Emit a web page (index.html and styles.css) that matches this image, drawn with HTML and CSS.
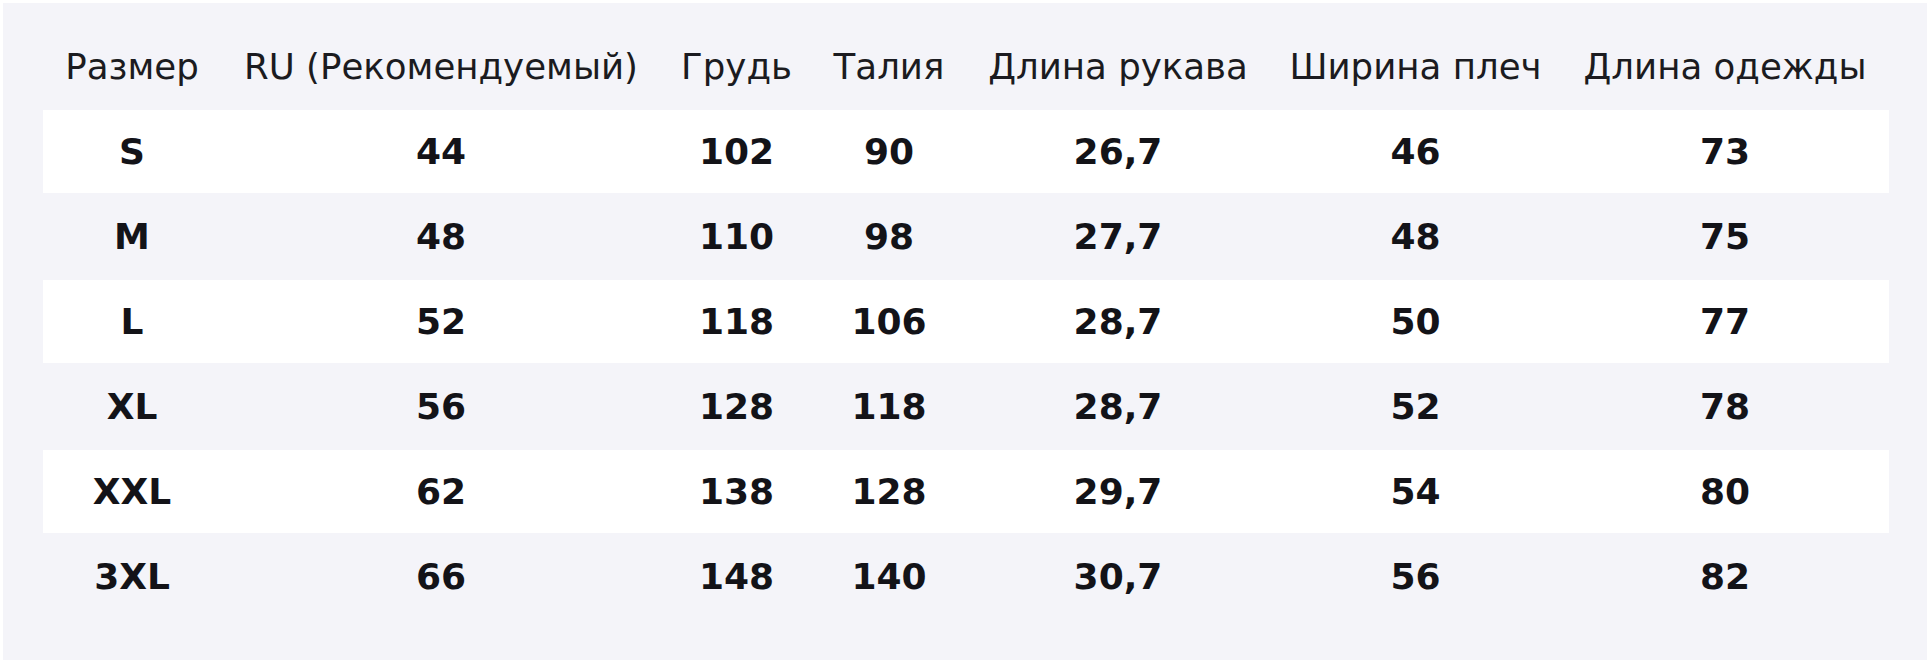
FILE: index.html
```html
<!DOCTYPE html>
<html lang="ru">
<head>
<meta charset="utf-8">
<title>Таблица размеров</title>
<link rel="stylesheet" href="styles.css">
</head>
<body>
<div class="sheet">
  <div class="table">
    <div class="row head">
      <div>Размер</div><div>RU (Рекомендуемый)</div><div>Грудь</div><div>Талия</div><div>Длина рукава</div><div>Ширина плеч</div><div>Длина одежды</div>
    </div>
    <div class="row light">
      <div>S</div><div>44</div><div>102</div><div>90</div><div>26,7</div><div>46</div><div>73</div>
    </div>
    <div class="row">
      <div>M</div><div>48</div><div>110</div><div>98</div><div>27,7</div><div>48</div><div>75</div>
    </div>
    <div class="row light">
      <div>L</div><div>52</div><div>118</div><div>106</div><div>28,7</div><div>50</div><div>77</div>
    </div>
    <div class="row">
      <div>XL</div><div>56</div><div>128</div><div>118</div><div>28,7</div><div>52</div><div>78</div>
    </div>
    <div class="row light">
      <div>XXL</div><div>62</div><div>138</div><div>128</div><div>29,7</div><div>54</div><div>80</div>
    </div>
    <div class="row">
      <div>3XL</div><div>66</div><div>148</div><div>140</div><div>30,7</div><div>56</div><div>82</div>
    </div>
  </div>
</div>
</body>
</html>
```
FILE: styles.css
```css
html, body {
  margin: 0;
  padding: 0;
  background: #ffffff;
}
body {
  padding: 3px;
  font-family: "DejaVu Sans", "Liberation Sans", sans-serif;
  color: #131318;
}
.sheet {
  background: #f4f4f9;
  padding: 22px 38px 40px 40px;
}
.table {
  display: flex;
  flex-direction: column;
}
.row {
  display: grid;
  grid-template-columns: 178px 440px 151px 154px 304px 291px 328px;
  height: 83px;
  border-bottom: 2px solid transparent;
  background-clip: padding-box;
  align-items: center;
  text-align: center;
  font-size: 36px;
  font-weight: bold;
  white-space: nowrap;
}
.row.head {
  font-size: 35.6px;
  font-weight: normal;
  color: #1b1b20;
}
.row.light {
  background-color: #ffffff;
}
```
